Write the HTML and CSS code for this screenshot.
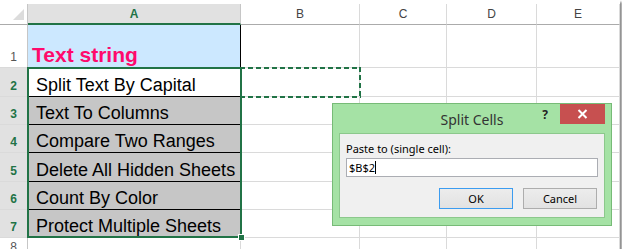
FILE: index.html
```html
<!DOCTYPE html>
<html lang="en">

<head>
    <meta charset="UTF-8">
    <title>Split Cells</title>
    <link rel="stylesheet" href="styles.css">
</head>

<body>
    <div class="sheet">
        <div class="grid">
            <div class="corner"><span class="select-all"></span></div>
            <div class="col-head active">A</div>
            <div class="col-head">B</div>
            <div class="col-head">C</div>
            <div class="col-head">D</div>
            <div class="col-head">E</div>

            <div class="row-head">1</div>
            <div class="cell title">Text string</div>
            <div class="cell"></div>
            <div class="cell"></div>
            <div class="cell"></div>
            <div class="cell"></div>

            <div class="row-head active">2</div>
            <div class="cell item first">Split Text By Capital</div>
            <div class="cell"></div>
            <div class="cell"></div>
            <div class="cell"></div>
            <div class="cell"></div>

            <div class="row-head active">3</div>
            <div class="cell item">Text To Columns</div>
            <div class="cell"></div>
            <div class="cell"></div>
            <div class="cell"></div>
            <div class="cell"></div>

            <div class="row-head active">4</div>
            <div class="cell item">Compare Two Ranges</div>
            <div class="cell"></div>
            <div class="cell"></div>
            <div class="cell"></div>
            <div class="cell"></div>

            <div class="row-head active">5</div>
            <div class="cell item">Delete All Hidden Sheets</div>
            <div class="cell"></div>
            <div class="cell"></div>
            <div class="cell"></div>
            <div class="cell"></div>

            <div class="row-head active">6</div>
            <div class="cell item">Count By Color</div>
            <div class="cell"></div>
            <div class="cell"></div>
            <div class="cell"></div>
            <div class="cell"></div>

            <div class="row-head active">7</div>
            <div class="cell item">Protect Multiple Sheets</div>
            <div class="cell"></div>
            <div class="cell"></div>
            <div class="cell"></div>
            <div class="cell"></div>

            <div class="row-head">8</div>
            <div class="cell"></div>
            <div class="cell"></div>
            <div class="cell"></div>
            <div class="cell"></div>
            <div class="cell"></div>
        </div>

        <div class="selection"><span class="fill-handle"></span></div>
        <div class="marquee"></div>

        <div class="dialog">
            <div class="titlebar">
                <span></span>
                <span class="dialog-title">Split Cells</span>
                <div class="controls">
                    <span class="help">?</span>
                    <span class="close">
                        <svg width="11" height="10" viewBox="0 0 11 10">
                            <path d="M1.5 1 L9.5 9 M9.5 1 L1.5 9" stroke="#fff" stroke-width="2" fill="none"/>
                        </svg>
                    </span>
                </div>
            </div>
            <div class="panel">
                <label class="field-label">Paste to (single cell):</label>
                <div class="field">$B$2<span class="caret"></span></div>
                <div class="buttons">
                    <span class="btn default">OK</span>
                    <span class="btn">Cancel</span>
                </div>
            </div>
        </div>
    </div>
</body>
</html>
```

FILE: styles.css
```css
:root {
    --grid: #dadada;
    --excel-green: #217346;
    --head-active: #e1e1e1;
}

body {
    margin: 0;
    background: #fff;
    font-family: 'Liberation Sans', Arial, sans-serif;
}

.sheet {
    position: relative;
    width: 620px;
    height: 249px;
    overflow: hidden;
    background: #fff;
    box-shadow: 2px 2px 2px rgba(0, 0, 0, 0.45);
}

.grid {
    display: grid;
    grid-template-columns: 28px 213px 119px 87px 90px 83px;
    grid-template-rows: 21px 43px 29px 28px 28px 29px 28px 28px 20px;
    padding-top: 4px;
}

.grid > div {
    box-sizing: border-box;
    border-right: 1px solid var(--grid);
    border-bottom: 1px solid var(--grid);
}

/* headers */
.corner {
    position: relative;
    border-bottom-color: #ababab !important;
    border-right-color: #c6c6c6 !important;
}

.select-all {
    position: absolute;
    left: 13px;
    top: 5px;
    width: 11px;
    height: 11px;
    background: #dcdcdc;
    clip-path: polygon(100% 0, 100% 100%, 0 100%);
}

.col-head {
    display: flex;
    align-items: center;
    justify-content: center;
    font-size: 12px;
    color: #444;
    border-bottom-color: #ababab !important;
}

.col-head.active {
    background: var(--head-active);
    color: var(--excel-green);
    font-weight: bold;
    border-bottom: 2px solid var(--excel-green) !important;
    border-right-color: #c6c6c6 !important;
}

.row-head {
    display: flex;
    align-items: flex-end;
    justify-content: center;
    padding-bottom: 3px;
    font-size: 12px;
    line-height: 14px;
    color: #555;
    border-right-color: #c6c6c6 !important;
}

.row-head.active {
    background: var(--head-active);
    color: var(--excel-green);
    font-weight: bold;
}

/* cells */
.cell {
    display: flex;
    align-items: flex-end;
    white-space: nowrap;
}

.cell.title {
    background: #cce8ff;
    border-right: 1px solid #000 !important;
    padding-left: 4px;
    font-size: 21px;
    font-weight: bold;
    line-height: 24px;
    color: #ff0a6c;
}

.cell.item {
    background: #c6c6c6;
    border-bottom: 1px solid #000 !important;
    padding: 0 0 1px 8px;
    font-size: 18px;
    line-height: 20px;
    color: #000;
}

.cell.item.first {
    background: #fff;
}

/* selection and copy marquee */
.selection {
    position: absolute;
    left: 27px;
    top: 67px;
    width: 215px;
    height: 171px;
    box-sizing: border-box;
    border: 2px solid var(--excel-green);
}

.fill-handle {
    position: absolute;
    right: -5px;
    bottom: -5px;
    width: 5px;
    height: 5px;
    background: var(--excel-green);
    border: 1px solid #fff;
}

.marquee {
    position: absolute;
    left: 240px;
    top: 67px;
    width: 121px;
    height: 31px;
    background:
        repeating-linear-gradient(90deg, var(--excel-green) 0 5px, transparent 5px 8px) top / 100% 2px no-repeat,
        repeating-linear-gradient(90deg, var(--excel-green) 0 5px, transparent 5px 8px) bottom / 100% 2px no-repeat,
        repeating-linear-gradient(180deg, var(--excel-green) 0 5px, transparent 5px 8px) left / 2px 100% no-repeat,
        repeating-linear-gradient(180deg, var(--excel-green) 0 5px, transparent 5px 8px) right / 2px 100% no-repeat;
}

/* dialog */
.dialog {
    position: absolute;
    left: 332px;
    top: 103px;
    width: 280px;
    height: 123px;
    box-sizing: border-box;
    background: #a5e2a5;
    border: 1px solid #77bb77;
    display: flex;
    flex-direction: column;
    font-family: 'Noto Sans', 'Open Sans', sans-serif;
}

.titlebar {
    height: 29px;
    display: grid;
    grid-template-columns: 1fr auto 1fr;
}

.dialog-title {
    font-size: 14px;
    line-height: 29px;
    color: #333;
    padding-top: 1px;
}

.controls {
    display: flex;
    justify-content: flex-end;
    align-items: flex-start;
    padding-right: 6px;
}

.help {
    font-size: 12px;
    font-weight: bold;
    line-height: 18px;
    color: #222;
    margin: 2px 12px 0 0;
}

.close {
    width: 45px;
    height: 20px;
    background: #c75050;
    display: flex;
    align-items: center;
    justify-content: center;
}

.panel {
    flex: 1;
    margin: 0 6px 7px;
    background: #f0f0f0;
    border: 1px solid #8cc88c;
    padding: 7px 6px 0;
    display: flex;
    flex-direction: column;
    font-size: 11px;
    color: #000;
}

.field-label {
    line-height: 16px;
}

.field {
    margin-top: 1px;
    height: 19px;
    box-sizing: border-box;
    background: #fff;
    border: 1px solid #abadb3;
    padding-left: 2px;
    line-height: 17px;
    display: flex;
    align-items: center;
}

.caret {
    width: 1px;
    height: 13px;
    background: #000;
}

.buttons {
    margin-top: 11px;
    display: flex;
    justify-content: flex-end;
    gap: 10px;
    padding-right: 1px;
}

.btn {
    width: 74px;
    height: 21px;
    box-sizing: border-box;
    border: 1px solid #adadad;
    background: linear-gradient(#ececec, #e2e2e2);
    display: flex;
    align-items: center;
    justify-content: center;
    color: #000;
}

.btn.default {
    border-color: #3c9cf0;
}
```
